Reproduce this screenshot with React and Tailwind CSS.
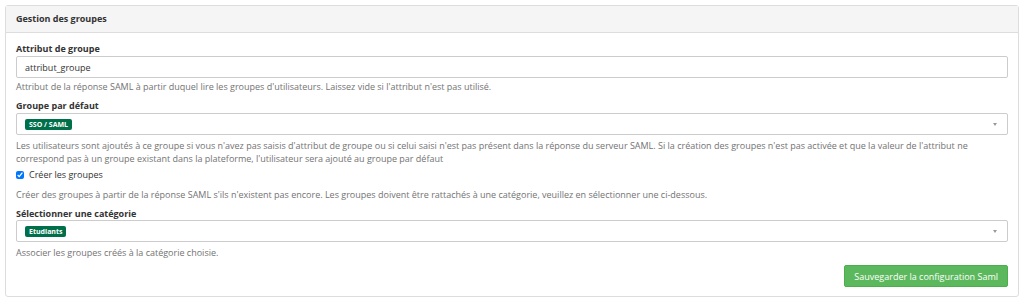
import React from 'react';

const Badge = ({ children }) => (
    <span className="inline-block rounded-[2px] bg-[#00704a] px-[4px] text-[7px] font-bold leading-[11px] text-white">
        {children}
    </span>
);

const Caret = () => (
    <span className="ml-auto mr-[2px] h-0 w-0 border-x-[2.5px] border-t-[3px] border-x-transparent border-t-[#999]" />
);

const App = () => {
    return (
        <div className="h-[304px] w-[1024px] bg-white px-[5px] pt-[5px] font-['Open_Sans',sans-serif] text-[#333]">
            <div className="rounded-[3px] border border-[#ddd] bg-white">
                <div className="border-b border-[#ddd] bg-[#f5f5f5] px-[10px] py-[7px] text-[9px] font-bold leading-[12px]">
                    Gestion des groupes
                </div>
                <div className="px-[10px] pb-[9px] pt-[9px] text-[9px] leading-[13px]">
                    <label className="block font-bold">Attribut de groupe</label>
                    <div className="mt-[1px] flex h-[22px] items-center rounded-[2px] border border-[#ccc] px-[8px]">
                        attribut_groupe
                    </div>
                    <p className="mt-[2px] text-[#737373]">
                        Attribut de la réponse SAML à partir duquel lire les groupes d'utilisateurs. Laissez vide si l'attribut n'est pas utilisé.
                    </p>

                    <label className="mt-[6px] block font-bold">Groupe par défaut</label>
                    <div className="mt-[1px] flex h-[22px] items-center rounded-[2px] border border-[#ccc] pl-[8px] pr-[8px]">
                        <Badge>SSO / SAML</Badge>
                        <Caret />
                    </div>
                    <p className="mt-[4px] text-[#737373]">
                        Les utilisateurs sont ajoutés à ce groupe si vous n'avez pas saisis d'attribut de groupe ou si celui saisi n'est pas présent dans la réponse du serveur SAML. Si la création des groupes n'est pas activée et que la valeur de l'attribut ne correspond pas à un groupe existant dans la plateforme, l'utilisateur sera ajouté au groupe par défaut
                    </p>

                    <label className="mt-[3px] flex items-center gap-[5px]">
                        <input type="checkbox" defaultChecked className="m-0 h-[8px] w-[8px] accent-[#0075ff]" />
                        <span>Créer les groupes</span>
                    </label>
                    <p className="mt-[7px] text-[#737373]">
                        Créer des groupes à partir de la réponse SAML s'ils n'existent pas encore. Les groupes doivent être rattachés à une catégorie, veuillez en sélectionner une ci-dessous.
                    </p>

                    <label className="mt-[6px] block font-bold">Sélectionner une catégorie</label>
                    <div className="flex h-[22px] items-center rounded-[2px] border border-[#ccc] pl-[8px] pr-[8px]">
                        <Badge>Etudiants</Badge>
                        <Caret />
                    </div>
                    <p className="mt-[4px] text-[#737373]">Associer les groupes créés à la catégorie choisie.</p>

                    <div className="mt-[6px] flex justify-end">
                        <button className="h-[22px] rounded-[2px] border border-[#4cae4c] bg-[#5cb85c] px-[9px] text-[9px] text-white">
                            Sauvegarder la configuration Saml
                        </button>
                    </div>
                </div>
            </div>
        </div>
    );
};

export default App;
